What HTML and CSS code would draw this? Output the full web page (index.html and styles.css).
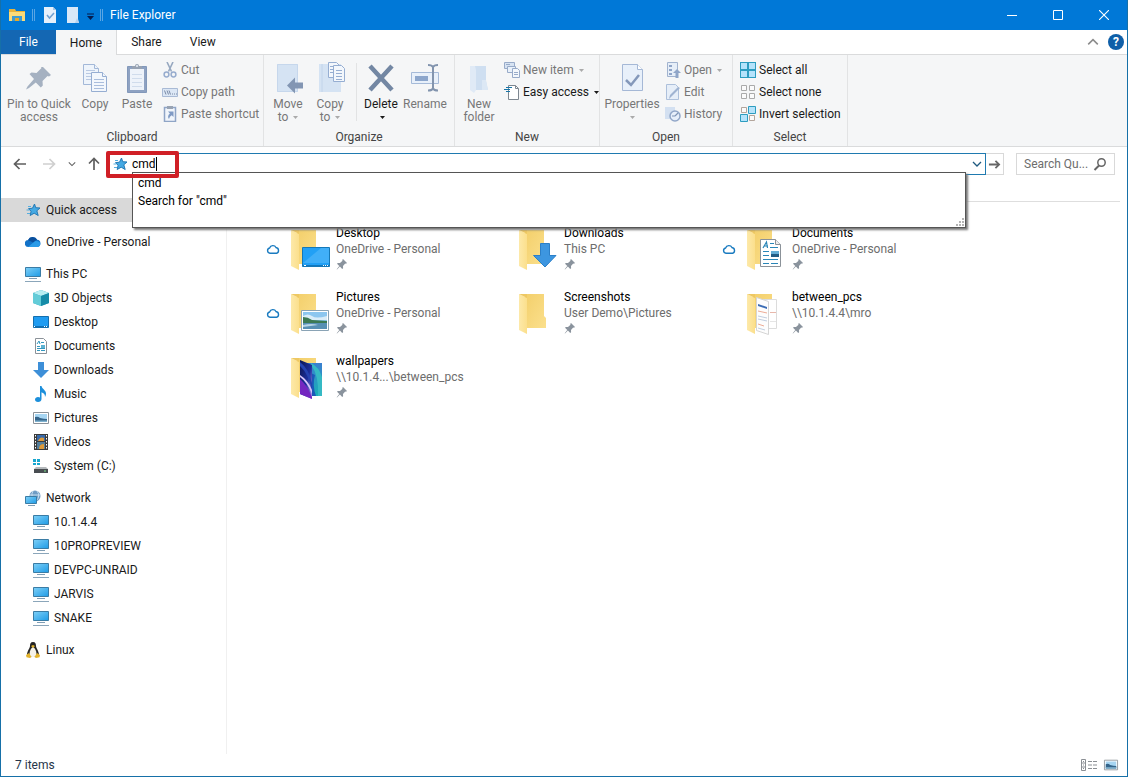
FILE: index.html
```html
<!DOCTYPE html>
<html lang="en">
<head>
  <meta charset="UTF-8" />
  <meta name="viewport" content="width=device-width, initial-scale=1.0"/>
  <title>File Explorer</title>
  <link rel="stylesheet" href="styles.css">
</head>
<body>
  <!-- icon sprite -->
  <svg class="sprite" aria-hidden="true">
    <defs>
      <linearGradient id="screenFill" x1="0" y1="0" x2="1" y2="1">
        <stop offset="0" stop-color="#7fd0f7"/><stop offset="1" stop-color="#1e9be6"/>
      </linearGradient>
      <linearGradient id="folderBack" x1="0" y1="0" x2="1" y2="1">
        <stop offset="0" stop-color="#f3cf6b"/><stop offset="1" stop-color="#fbe08d"/>
      </linearGradient>
      <linearGradient id="folderFlap" x1="0" y1="0" x2="1" y2="0">
        <stop offset="0" stop-color="#fde9a9"/><stop offset="1" stop-color="#fbdf8c"/>
      </linearGradient>
      <linearGradient id="wall" x1="0" y1="0" x2="1" y2="1">
        <stop offset="0" stop-color="#0b1650"/><stop offset=".55" stop-color="#1c2f9c"/><stop offset="1" stop-color="#b79cf0"/>
      </linearGradient>
      <linearGradient id="wall2" x1="0" y1="0" x2="0" y2="1">
        <stop offset="0" stop-color="#3a7fd0"/><stop offset="1" stop-color="#19b0b5"/>
      </linearGradient>
    </defs>
    <symbol id="i-explorer" viewBox="0 0 18 16">
      <path d="M1 2h6l1 2h9v10H1z" fill="#e8b33c"/><path d="M1 5h16v9H1z" fill="#fbdb79"/><path d="M4 14V9h10v5h-3v-3H7v3z" fill="#3f9bd0"/><path d="M7 11h4v3H7z" fill="#e9a825"/>
    </symbol>
    <symbol id="i-page-check" viewBox="0 0 14 16">
      <path d="M1 0h9l3 3v13H1z" fill="#e6f0fb"/><path d="M10 0v3h3" fill="#a9c5e4"/><path d="M4 8l2.500 3L11 6" fill="none" stroke="#6f9fd0" stroke-width="1.500"/>
    </symbol>
    <symbol id="i-page-new" viewBox="0 0 14 16"><path d="M1 0h11v12l1 4H1z" fill="#d9e8f8"/><path d="M11 11l2 5h-4z" fill="#b7d1ee"/></symbol>
    <symbol id="i-qat" viewBox="0 0 9 8"><path d="M1 1h7" stroke="#051b4d"/><path d="M1 3h7L4.500 7z" fill="#051b4d"/></symbol>
    <symbol id="i-tri" viewBox="0 0 5 3"><path d="M0 0h5L2.500 3z" fill="currentColor"/></symbol>

    <symbol id="i-pin-big" viewBox="0 0 32 32">
      <path d="M20 5l8 8-2 1.500-1.500-.5-5 5 .3 4.500-2 2-5-5L6 26l-3 1.500L4.500 24.500 11 17l-4.500-5 2-1.500 5 .5 5-5-.5-1z" fill="#a5b1c1"/>
    </symbol>
    <symbol id="i-copy" viewBox="0 0 32 32">
      <g stroke="#a3b8d8" fill="#eef4fb"><path d="M4.500 2.500h11l4 4v16h-15z"/><path d="M15.500 2.500v4h4" /></g>
      <path d="M7 8.500h9M7 11.500h9M7 14.500h9M7 17.500h9" stroke="#b9c9e2"/>
      <g stroke="#96aed2" fill="#f3f7fc"><path d="M12.500 10.500h11l4 4v15h-15z"/><path d="M23.500 10.500v4h4"/></g>
      <path d="M15 17.500h10M15 20.500h10M15 23.500h10M15 26.500h10" stroke="#a9bddc"/>
    </symbol>
    <symbol id="i-paste" viewBox="0 0 32 32">
      <path d="M6.500 4.500h19v26h-19z" fill="#8ea2c2" stroke="#8298ba"/><path d="M9 7h14v21H9z" fill="#eef3fa"/>
      <path d="M11 12.500h10M11 16.500h10M11 20.500h10M11 24.500h10" stroke="#d0dcec"/>
      <path d="M11 7V4h3a2 2 0 0 1 4 0h3v3z" fill="#98a3b3"/><circle cx="16" cy="4" r="1" fill="#e9eef5"/>
    </symbol>
    <symbol id="i-cut" viewBox="0 0 16 16">
      <path d="M5 0l4.500 9.500M11 0L6.500 9.500" stroke="#97a8c0" stroke-width="1.600" fill="none"/>
      <circle cx="4.500" cy="12.500" r="2.400" fill="none" stroke="#97acce" stroke-width="1.500"/><circle cx="11.500" cy="12.500" r="2.400" fill="none" stroke="#97acce" stroke-width="1.500"/>
    </symbol>
    <symbol id="i-path" viewBox="0 0 16 16">
      <path d="M.5 4.500h15v8H.5z" fill="#dce7f5" stroke="#a9bad5"/><path d="M2.500 6.500l1.500 4M5 6.500l1.500 4M7 6.500l1.500 4" stroke="#7889a5"/><path d="M10 10h1M12 10h1M14 10h1" stroke="#7889a5"/>
    </symbol>
    <symbol id="i-shortcut" viewBox="0 0 16 16">
      <path d="M2.500 1.500h11v14h-11z" fill="#f0f5fb" stroke="#8fa5c6" stroke-width="1.500"/><path d="M5 0h6v3H5z" fill="#98a3b3"/><path d="M6 5.500h5.500V11L9.700 9.200Q7.500 10.500 7 13 4.800 10 7.900 7.400z" fill="#7f9ac4"/>
    </symbol>
    <symbol id="i-move" viewBox="0 0 32 32">
      <path d="M5 2h21v28H5z" fill="#d5e3f3"/><path d="M5.500 2.500h20v27h-20z" fill="none" stroke="#c6d7ec"/><path d="M15 23.500l8-8v5h8v6h-8v5z" fill="#8396b3"/>
    </symbol>
    <symbol id="i-copyto" viewBox="0 0 32 32">
      <path d="M5 2h22v28H5z" fill="#d5e3f3"/><path d="M8 2v28" stroke="#c2d4ea"/>
      <g stroke="#96aed2" fill="#f3f7fc"><path d="M14.500.5h8l3 3v12h-11z"/><path d="M19.500 3.500h8l3 3v13h-11z"/></g>
      <path d="M22 8.500h6M22 11.500h6M22 14.500h6M22 17.500h6M16 4.500h3M16 7.500h3M16 10.500h3" stroke="#96aed2"/>
    </symbol>
    <symbol id="i-delete" viewBox="0 0 32 32"><path d="M5 4l22 24M27 4L5 28" stroke="#7387a3" stroke-width="4.500"/></symbol>
    <symbol id="i-rename" viewBox="0 0 32 32">
      <path d="M2.500 10.500h27v11h-27z" fill="#e8f0fa" stroke="#a5bad8"/><path d="M6 14h13v5H6z" fill="#8ca6cc"/>
      <path d="M19 3q4 0 5 2 1-2 5-2M24 4v23M19 28.500q4 0 5-2 1 2 5 2" fill="none" stroke="#8294ae" stroke-width="2"/>
    </symbol>
    <symbol id="i-newfolder" viewBox="0 0 32 32"><path d="M12 4h11v15l2 9H12z" fill="#cfdff1"/><path d="M7 4h5l1 4v20l-2 3-4-3z" fill="#e0eaf6"/><path d="M19 18h4l2 10h-6z" fill="#dce8f5"/></symbol>
    <symbol id="i-newitem" viewBox="0 0 16 16">
      <path d="M.5.5h10v6H.5z" fill="#d7e3f2" stroke="#98abc9"/><path d="M3.500 4.500h8v6h-8z" fill="#e9f1fa" stroke="#98abc9"/><path d="M8.500 6.500h5l2 2v7h-7z" fill="#f4f8fc" stroke="#98abc9"/><path d="M10 10.500h4M10 12.500h4M2 2.500h4" stroke="#98abc9"/>
    </symbol>
    <symbol id="i-easy" viewBox="0 0 16 16">
      <path d="M4.500 1.500h7l3 3v11h-10z" fill="#fff" stroke="#7e8790"/><path d="M11.500 1.500v3h3" fill="none" stroke="#7e8790"/><path d="M2 3.500h6M0 5.500h6M2 7.500h4" stroke="#1976a8" stroke-width="1.200"/>
    </symbol>
    <symbol id="i-props" viewBox="0 0 32 32">
      <path d="M6.500 2.500h15l5 5v21h-20z" fill="#e8f0fa" stroke="#a5b8d6"/><path d="M21.500 2.500v5h5" fill="#fff" stroke="#a5b8d6"/><path d="M10 18l5 5 8-10" fill="none" stroke="#8498ba" stroke-width="2.500"/>
    </symbol>
    <symbol id="i-open" viewBox="0 0 16 16">
      <path d="M2.500.5h10v14h-10z" fill="#e6eef8" stroke="#a1b3cf"/><path d="M4 3h3v2H4zM4 7h3v2H4zM4 11h3v2H4z" fill="#8fa5c8"/><path d="M12 7l4 4h-2.500v5h-3v-5H8z" fill="#8fa5c8"/>
    </symbol>
    <symbol id="i-edit" viewBox="0 0 16 16">
      <path d="M1.500.5h9l3 3v12h-12z" fill="#e6eef8" stroke="#adc0db"/><path d="M15 4L7 12l-3 3 1-4 8-8z" fill="#9fb3d1"/>
    </symbol>
    <symbol id="i-history" viewBox="0 0 16 16">
      <path d="M0 1h10v12H0z" fill="#d3e0f1"/><circle cx="10" cy="10" r="5" fill="#e6eefa" stroke="#91a6c8" stroke-width="1.500"/><path d="M10 10l3-3M10 10H7" stroke="#7f94b5" stroke-width="1.200"/>
    </symbol>
    <symbol id="i-selall" viewBox="0 0 16 16"><path d="M0 0h16v16H0z" fill="#2d9dc0"/><path d="M1 1h6v6H1zM9 1h6v6H9zM1 9h6v6H1zM9 9h6v6H9z" fill="#b5e3fb"/></symbol>
    <symbol id="i-selnone" viewBox="0 0 16 16"><path d="M1.500 1.500h5v5h-5zM9.500 1.500h5v5h-5zM1.500 9.500h5v5h-5zM9.500 9.500h5v5h-5z" fill="#fbfbfb" stroke="#aaa"/></symbol>
    <symbol id="i-selinv" viewBox="0 0 16 16"><path d="M1.500 1.500h5v5h-5zM9.500 9.500h5v5h-5z" fill="#fbfbfb" stroke="#b3a59c"/><path d="M8.500.5h7v7h-7zM.5 8.500h7v7h-7z" fill="#b5e3fb" stroke="#2d9dc0"/></symbol>

    <symbol id="i-star" viewBox="0 0 16 16">
      <path d="M9.500 2l1.200 3.700 4.300.3-3.200 2.800 1.400 4.700-4-2.300-4 2.300.9-4.300L3.500 6.700l4-.5z" fill="#45a9e3" stroke="#2379b5"/>
      <path d="M3 4.500h3M1.500 8h3M2 11.500h3" stroke="#55aee0"/>
    </symbol>
    <symbol id="i-onedrive" viewBox="0 0 16 16"><path d="M3.500 13a3.500 3.500 0 0 1-.3-7 5 5 0 0 1 9-.3A3.700 3.700 0 0 1 12.500 13z" fill="#1272c8"/><path d="M3 13l7-6 3 .2A3 3 0 0 1 13 13z" fill="#2a9be8"/><path d="M3 6a5 5 0 0 1 9-.4L8 8.500z" fill="#0b4f9c"/></symbol>
    <symbol id="i-pc" viewBox="0 0 16 16">
      <path d="M.5 1.500h15v9H.5z" fill="url(#screenFill)" stroke="#3a7ca5"/><path d="M4 12.500h8" stroke="#7f9db4"/><path d="M0 15.500h16" stroke="#8ba6ba"/>
    </symbol>
    <symbol id="i-3d" viewBox="0 0 16 16"><path d="M8 0l8 3v10l-8 3-8-3V3z" fill="#2ea9c0"/><path d="M8 0l8 3-8 3-8-3z" fill="#b8eef2"/><path d="M0 3l8 3v10l-8-3z" fill="#63ccd8"/><path d="M8 6l8-3v10l-8 3z" fill="#168ca8"/></symbol>
    <symbol id="i-desktop" viewBox="0 0 16 16"><path d="M.5 2.500h15v11H.5z" fill="#209cf1" stroke="#146fae"/><path d="M1 12.500h14" stroke="#0f6fb4"/><path d="M1 12.500h1M11 12.500h1M13 12.500h1" stroke="#fff"/></symbol>
    <symbol id="i-doc" viewBox="0 0 16 16"><path d="M2.500.5h8l3 3v12h-11z" fill="#fff" stroke="#8b9299"/><path d="M4 6l2-3 1 3M8 4.500h3M4 8.500h3M4 10.500h8M4 12.500h3M8 12.500h4" stroke="#3498bf" fill="none"/><path d="M8 7h4v3H8z" fill="#5eb3d3"/></symbol>
    <symbol id="i-down" viewBox="0 0 16 16"><path d="M5 0h6v8h5l-8 8-8-8h5z" fill="#3d8fd8"/></symbol>
    <symbol id="i-music" viewBox="0 0 16 16"><path d="M7 0h1.500c.5 3 4.500 4 4.500 7.500 0 1.500-.5 2.500-1 3.500.3-3-1.500-4-3.500-4.800V13c0 2-1.500 3-3.500 3S2 15 2 13.500 3.500 11 5 11c.8 0 1.500.2 2 .5z" fill="#1c8fdb"/></symbol>
    <symbol id="i-pic" viewBox="0 0 16 16"><path d="M.5 2.500h15v11H.5z" fill="#fff" stroke="#8b9299"/><path d="M2 4h12v8H2z" fill="#a6d5f2"/><path d="M2 7q3-1 5 1 4 1 7 1v3H2z" fill="#34648a"/><path d="M2 10.500h12V12H2z" fill="#7fb2cf"/></symbol>
    <symbol id="i-video" viewBox="0 0 16 16"><path d="M1 0h14v16H1z" fill="#3b3b3b"/><path d="M4 1h8v6H4z" fill="#3869a8"/><path d="M4 8h8v7H4z" fill="#557f9c"/><path d="M5 7q2-5 6-3v3zM6 15q0-5 5-5v5z" fill="#dd9a3b"/><path d="M2.500 1v14M13.500 1v14" stroke="#fff" stroke-dasharray="1.500 1.500"/></symbol>
    <symbol id="i-drive" viewBox="0 0 16 16"><path d="M0 1h3v3H0zM4 1h3v3H4zM0 5h3v2H0zM4 5h3v2H4z" fill="#18a7cf"/><path d="M3 9h10l2 2H1z" fill="#b5b9bc"/><path d="M1 11h14v4H1z" fill="#484d51"/><path d="M11 13h2" stroke="#7be08a"/></symbol>
    <symbol id="i-net" viewBox="0 0 16 16"><circle cx="10" cy="6" r="5.500" fill="#6f9cc4"/><path d="M8 1q-3 5 2 10M12 1q4 5-1 10M5 5h10" stroke="#c9dff0" fill="none"/><path d="M.5 6.500h11v7H.5z" fill="url(#screenFill)" stroke="#3a7ca5"/><path d="M3 15.500h7" stroke="#7f9db4"/></symbol>
    <symbol id="i-tux" viewBox="0 0 16 16">
      <path d="M8 0c2.500 0 3 2 3 4 0 2 3 5 3 9l-2 2H4l-2-2c0-4 3-7 3-9 0-2 .5-4 3-4z" fill="#252525"/><path d="M8 5c2 1 3.500 4 3.500 7S10 15 8 15s-3.500 0-3.500-3S6 6 8 5z" fill="#f5f2e9"/><path d="M6 4l2-1 2 1-2 2zM1 13l3-2 2.500 4-1.500 1-3.500-.8zM15 13l-3-2-2.500 4 1.500 1 3.500-.8z" fill="#e3b32c"/>
    </symbol>

    <symbol id="i-back" viewBox="0 0 14 14"><path d="M13 7H2M6.500 2L1.500 7l5 5" fill="none" stroke="currentColor" stroke-width="1.700"/></symbol>
    <symbol id="i-fwd" viewBox="0 0 14 14"><path d="M1 7h11M7.500 2l5 5-5 5" fill="none" stroke="currentColor" stroke-width="1.700"/></symbol>
    <symbol id="i-up" viewBox="0 0 14 14"><path d="M7 13V2M2 6.500l5-5 5 5" fill="none" stroke="currentColor" stroke-width="1.700"/></symbol>
    <symbol id="i-chev" viewBox="0 0 10 10"><path d="M1 3l4 4 4-4" fill="none" stroke="currentColor" stroke-width="1.300"/></symbol>
    <symbol id="i-chev-up" viewBox="0 0 10 10"><path d="M1 7l4-4 4 4" fill="none" stroke="currentColor" stroke-width="1.300"/></symbol>
    <symbol id="i-go" viewBox="0 0 14 14"><path d="M1 7h11M8 3l4 4-4 4" fill="none" stroke="currentColor" stroke-width="1.900"/></symbol>
    <symbol id="i-search" viewBox="0 0 14 14"><circle cx="8.500" cy="5.500" r="3.700" fill="none" stroke="currentColor" stroke-width="1.500"/><path d="M6 8.500L1.500 13" stroke="currentColor" stroke-width="2"/></symbol>
    <symbol id="i-min" viewBox="0 0 10 10"><path d="M0 5.500h10" stroke="#fff"/></symbol>
    <symbol id="i-max" viewBox="0 0 10 10"><path d="M.5.5h9v9h-9z" fill="none" stroke="#fff"/></symbol>
    <symbol id="i-close" viewBox="0 0 10 10"><path d="M0 0l10 10M10 0L0 10" stroke="#fff" stroke-width="1.100"/></symbol>
    <symbol id="i-grip" viewBox="0 0 10 10"><path d="M7 1h2v2H7zM4 4h2v2H4zM7 4h2v2H7zM1 7h2v2H1zM4 7h2v2H4zM7 7h2v2H7z" fill="#b4b4b4"/></symbol>

    <symbol id="i-cloud" viewBox="0 0 14 14"><path d="M4 11.300a2.700 2.700 0 0 1-.4-5.300A3.500 3.500 0 0 1 10 5.500a3 3 0 0 1 .5 5.800z" fill="none" stroke="#1a7bc0" stroke-width="1.400"/></symbol>
    <symbol id="i-pin" viewBox="0 0 12 12"><path d="M7 1l4 4-1 .8-.8-.2L7 8l.1 2.200-.9.8-2.300-2.500L1 11.500l-.3-.3L3.300 8 1 5.800l.8-.8 2.200.1L6.500 2.800 6.200 2z" fill="#8a939d"/></symbol>
    <symbol id="f-base" viewBox="0 0 48 48">
      <path d="M10 5h19v22l2 2v10H10z" fill="url(#folderBack)"/><path d="M4 5l8 4v36l-8-4z" fill="url(#folderFlap)"/><path d="M4 5h8v4z" fill="#eec862"/>
    </symbol>
    <symbol id="f-desktop" viewBox="0 0 48 48">
      <use href="#f-base"/><path d="M15.500 22.500h27v19h-27z" fill="#22a0f5" stroke="#1478b8"/><path d="M16 38l18-15h8v15z" fill="#41aff8"/><path d="M16 40.500h26" stroke="#1277bd"/><path d="M17 40.500h2M36 40.500h1M38 40.500h1M40 40.500h1" stroke="#fff"/>
    </symbol>
    <symbol id="f-down" viewBox="0 0 48 48"><use href="#f-base"/><path d="M25.500 18.500h9v12h6.500L30 42 18.500 30.500h7z" fill="#3d96e0" stroke="#2b7fc8"/></symbol>
    <symbol id="f-doc" viewBox="0 0 48 48">
      <use href="#f-base"/><path d="M17.500 14.500h15l5 5v22h-20z" fill="#fff" stroke="#8b9299"/><path d="M32.500 14.500v5h5" fill="#eee" stroke="#8b9299"/>
      <path d="M20 23l3.500-6 1 6M21 21h4M27 18.500h4M27 22.500h8M20 26.500h6M20 30.500h6M20 34.500h15M20 38.500h6M28 38.500h7" fill="none" stroke="#2a86b8" stroke-width="1.200"/><path d="M28 26h8v6h-8z" fill="#64add6"/><path d="M28 29h8v3h-8z" fill="#225c84"/>
    </symbol>
    <symbol id="f-pic" viewBox="0 0 48 48">
      <use href="#f-base"/><path d="M14.500 21.500h27v20h-27z" fill="#fff" stroke="#8aa3b5"/><path d="M16 23h24v17H16z" fill="#8cc6ef"/><path d="M16 27q5-3 9 0t15 0v4H16z" fill="#d9ecf8"/><path d="M16 28q5 0 9 3l15 1v3H16z" fill="#3c7a54"/><path d="M16 34h24v6H16z" fill="#5790b4"/><path d="M16 36q9-2 15 0l-15 2z" fill="#b9d6e6"/>
    </symbol>
    <symbol id="f-plain" viewBox="0 0 48 48"><use href="#f-base"/></symbol>
    <symbol id="f-papers" viewBox="0 0 48 48">
      <use href="#f-base"/><path d="M19.500 10.500h14v29h-14z" fill="#fff" stroke="#dcdcdc"/><path d="M27 23.500h6" stroke="#e8b8ab"/><path d="M27 32.500h6" stroke="#e5e5e5"/>
      <path d="M13.500 8.500l12 4v33l-12-4z" fill="#fdfdfd" stroke="#d5d5d5"/><path d="M15 15l9 3v2l-9-3z" fill="#3d6db5"/><path d="M15 22l9 2M15 35l6 2" stroke="#ecab95"/><path d="M15 27l9 2M15 30l9 2M15 39l7 2" stroke="#c0cddf"/>
    </symbol>
    <symbol id="f-wall" viewBox="0 0 48 48">
      <use href="#f-base"/><path d="M20 10h15v33H20z" fill="url(#wall2)"/><path d="M24 12q8 10 7 31h4V24q-3-10-11-14z" fill="#35b9c4"/><path d="M28 22q-3 10 1 21h-5V20z" fill="#1b58b8"/>
      <path d="M13 7l12 5v34l-12-5z" fill="url(#wall)"/><path d="M13 13q9 8 12 26v-9q-3-14-12-21z" fill="#2443b0"/><path d="M13 26q7 6 12 18v2l-12-5z" fill="#7427c0"/><path d="M13 24q7 5 12 17v-4q-4-10-12-15z" fill="#d6c3fa"/>
    </symbol>
    <symbol id="i-details" viewBox="0 0 16 12"><path d="M.5.5h4v11h-4zM.5 4h4M.5 8h4" fill="none" stroke="#8b8f94"/><path d="M2 2.500h1M2 6h1M2 9.500h1M7 2.500h4M12 2.500h4M7 6h4M12 6h4M7 9.500h4M12 9.500h4" stroke="#8b8f94"/></symbol>
  </svg>

  <div class="window">
    <header class="titlebar">
      <svg class="app-icon"><use href="#i-explorer"/></svg>
      <span class="tick"></span>
      <button class="qat" aria-label="Properties"><svg><use href="#i-page-check"/></svg></button>
      <button class="qat" aria-label="New folder"><svg><use href="#i-page-new"/></svg></button>
      <button class="qat qat-more" aria-label="Customize Quick Access Toolbar"><svg><use href="#i-qat"/></svg></button>
      <span class="tick"></span>
      <span class="title">File Explorer</span>
      <div class="win-buttons">
        <button aria-label="Minimize"><svg><use href="#i-min"/></svg></button>
        <button aria-label="Maximize"><svg><use href="#i-max"/></svg></button>
        <button aria-label="Close"><svg><use href="#i-close"/></svg></button>
      </div>
    </header>

    <nav class="tabs">
      <button class="tab file">File</button>
      <button class="tab active">Home</button>
      <button class="tab">Share</button>
      <button class="tab">View</button>
      <div class="tabs-right">
        <button class="collapse" aria-label="Minimize the Ribbon"><svg><use href="#i-chev-up"/></svg></button>
        <button class="help" aria-label="Help">?</button>
      </div>
    </nav>

    <section class="ribbon">
      <div class="group clipboard">
        <div class="group-body">
          <button class="big wide" disabled><svg><use href="#i-pin-big"/></svg><span>Pin to Quick<br>access</span></button>
          <button class="big" disabled><svg><use href="#i-copy"/></svg><span>Copy</span></button>
          <button class="big" disabled><svg><use href="#i-paste"/></svg><span>Paste</span></button>
          <div class="stack">
            <button class="small" disabled><svg><use href="#i-cut"/></svg>Cut</button>
            <button class="small" disabled><svg><use href="#i-path"/></svg>Copy path</button>
            <button class="small" disabled><svg><use href="#i-shortcut"/></svg>Paste shortcut</button>
          </div>
        </div>
        <div class="group-name">Clipboard</div>
      </div>
      <div class="group organize">
        <div class="group-body">
          <button class="big" disabled><svg><use href="#i-move"/></svg><span>Move<br>to <svg class="tri"><use href="#i-tri"/></svg></span></button>
          <button class="big" disabled><svg><use href="#i-copyto"/></svg><span>Copy<br>to <svg class="tri"><use href="#i-tri"/></svg></span></button>
          <span class="divider"></span>
          <button class="big"><svg><use href="#i-delete"/></svg><span>Delete<br><svg class="tri"><use href="#i-tri"/></svg></span></button>
          <button class="big mid" disabled><svg><use href="#i-rename"/></svg><span>Rename</span></button>
        </div>
        <div class="group-name">Organize</div>
      </div>
      <div class="group new">
        <div class="group-body">
          <button class="big" disabled><svg><use href="#i-newfolder"/></svg><span>New<br>folder</span></button>
          <div class="stack">
            <button class="small" disabled><svg><use href="#i-newitem"/></svg>New item<svg class="tri"><use href="#i-tri"/></svg></button>
            <button class="small"><svg><use href="#i-easy"/></svg>Easy access<svg class="tri"><use href="#i-tri"/></svg></button>
          </div>
        </div>
        <div class="group-name">New</div>
      </div>
      <div class="group open">
        <div class="group-body">
          <button class="big props" disabled><svg><use href="#i-props"/></svg><span>Properties<br><svg class="tri"><use href="#i-tri"/></svg></span></button>
          <div class="stack">
            <button class="small" disabled><svg><use href="#i-open"/></svg>Open<svg class="tri"><use href="#i-tri"/></svg></button>
            <button class="small" disabled><svg><use href="#i-edit"/></svg>Edit</button>
            <button class="small" disabled><svg><use href="#i-history"/></svg>History</button>
          </div>
        </div>
        <div class="group-name">Open</div>
      </div>
      <div class="group select">
        <div class="group-body">
          <div class="stack">
            <button class="small"><svg><use href="#i-selall"/></svg>Select all</button>
            <button class="small"><svg><use href="#i-selnone"/></svg>Select none</button>
            <button class="small"><svg><use href="#i-selinv"/></svg>Invert selection</button>
          </div>
        </div>
        <div class="group-name">Select</div>
      </div>
    </section>

    <div class="navbar">
      <button class="nav-btn" aria-label="Back"><svg><use href="#i-back"/></svg></button>
      <button class="nav-btn" aria-label="Forward" disabled><svg><use href="#i-fwd"/></svg></button>
      <button class="nav-btn recent" aria-label="Recent locations"><svg><use href="#i-chev"/></svg></button>
      <button class="nav-btn up" aria-label="Up"><svg><use href="#i-up"/></svg></button>
      <div class="address">
        <svg class="ico"><use href="#i-star"/></svg>
        <input class="path" type="text" value="cmd" aria-label="Address">
        <span class="cursor"></span>
        <button class="drop" aria-label="Previous locations"><svg><use href="#i-chev"/></svg></button>
        <div class="suggestions">
          <a href="#">cmd</a>
          <a href="#">Search for "cmd"</a>
          <svg class="grip"><use href="#i-grip"/></svg>
        </div>
        <div class="highlight"></div>
      </div>
      <button class="go" aria-label="Go to"><svg><use href="#i-go"/></svg></button>
      <div class="search">
        <input type="text" placeholder="Search Qu..." aria-label="Search Quick access">
        <svg><use href="#i-search"/></svg>
      </div>
    </div>

    <main class="main">
      <aside class="tree">
        <ul><li class="current"><a href="#"><svg class="ico"><use href="#i-star"/></svg>Quick access</a></li></ul>
        <ul><li><a href="#"><svg class="ico"><use href="#i-onedrive"/></svg>OneDrive - Personal</a></li></ul>
        <ul>
          <li><a href="#"><svg class="ico"><use href="#i-pc"/></svg>This PC</a></li>
          <li class="sub"><a href="#"><svg class="ico"><use href="#i-3d"/></svg>3D Objects</a></li>
          <li class="sub"><a href="#"><svg class="ico"><use href="#i-desktop"/></svg>Desktop</a></li>
          <li class="sub"><a href="#"><svg class="ico"><use href="#i-doc"/></svg>Documents</a></li>
          <li class="sub"><a href="#"><svg class="ico"><use href="#i-down"/></svg>Downloads</a></li>
          <li class="sub"><a href="#"><svg class="ico"><use href="#i-music"/></svg>Music</a></li>
          <li class="sub"><a href="#"><svg class="ico"><use href="#i-pic"/></svg>Pictures</a></li>
          <li class="sub"><a href="#"><svg class="ico"><use href="#i-video"/></svg>Videos</a></li>
          <li class="sub"><a href="#"><svg class="ico"><use href="#i-drive"/></svg>System (C:)</a></li>
        </ul>
        <ul>
          <li><a href="#"><svg class="ico"><use href="#i-net"/></svg>Network</a></li>
          <li class="sub"><a href="#"><svg class="ico"><use href="#i-pc"/></svg>10.1.4.4</a></li>
          <li class="sub"><a href="#"><svg class="ico"><use href="#i-pc"/></svg>10PROPREVIEW</a></li>
          <li class="sub"><a href="#"><svg class="ico"><use href="#i-pc"/></svg>DEVPC-UNRAID</a></li>
          <li class="sub"><a href="#"><svg class="ico"><use href="#i-pc"/></svg>JARVIS</a></li>
          <li class="sub"><a href="#"><svg class="ico"><use href="#i-pc"/></svg>SNAKE</a></li>
        </ul>
        <ul><li><a href="#"><svg class="ico"><use href="#i-tux"/></svg>Linux</a></li></ul>
      </aside>

      <section class="content">
        <hr class="rule">
        <div class="tiles">
          <a class="tile" href="#"><svg class="cloud"><use href="#i-cloud"/></svg><svg class="folder"><use href="#f-desktop"/></svg>
            <span class="info"><b>Desktop</b><i>OneDrive - Personal</i><svg><use href="#i-pin"/></svg></span></a>
          <a class="tile" href="#"><span class="cloud"></span><svg class="folder"><use href="#f-down"/></svg>
            <span class="info"><b>Downloads</b><i>This PC</i><svg><use href="#i-pin"/></svg></span></a>
          <a class="tile" href="#"><svg class="cloud"><use href="#i-cloud"/></svg><svg class="folder"><use href="#f-doc"/></svg>
            <span class="info"><b>Documents</b><i>OneDrive - Personal</i><svg><use href="#i-pin"/></svg></span></a>
          <a class="tile" href="#"><svg class="cloud"><use href="#i-cloud"/></svg><svg class="folder"><use href="#f-pic"/></svg>
            <span class="info"><b>Pictures</b><i>OneDrive - Personal</i><svg><use href="#i-pin"/></svg></span></a>
          <a class="tile" href="#"><span class="cloud"></span><svg class="folder"><use href="#f-plain"/></svg>
            <span class="info"><b>Screenshots</b><i>User Demo\Pictures</i><svg><use href="#i-pin"/></svg></span></a>
          <a class="tile" href="#"><span class="cloud"></span><svg class="folder"><use href="#f-papers"/></svg>
            <span class="info"><b>between_pcs</b><i>\\10.1.4.4\mro</i><svg><use href="#i-pin"/></svg></span></a>
          <a class="tile" href="#"><span class="cloud"></span><svg class="folder"><use href="#f-wall"/></svg>
            <span class="info"><b>wallpapers</b><i>\\10.1.4...\between_pcs</i><svg><use href="#i-pin"/></svg></span></a>
        </div>
      </section>
    </main>

    <footer class="status">
      <span>7 items</span>
      <div class="views">
        <button aria-label="Details view"><svg><use href="#i-details"/></svg></button>
        <button aria-label="Large icons view"><svg><use href="#i-pic"/></svg></button>
      </div>
    </footer>
  </div>
</body>
</html>
```
FILE: styles.css
```css
* { box-sizing: border-box; }

body {
  margin: 0;
  font: 12px/16px Roboto, "Segoe UI", sans-serif;
  color: #1a1a1a;
}

button, input {
  font: inherit;
  color: inherit;
  border: 0;
  padding: 0;
  background: none;
}

a { color: inherit; text-decoration: none; }
svg { display: block; flex: none; }
.sprite { position: absolute; width: 0; height: 0; }
.ico { width: 16px; height: 16px; }

.window {
  display: flex;
  flex-direction: column;
  min-height: 100vh;
  background: #fff;
  border: 1px solid #1670a8;
  border-top: 0;
}

/* title bar */
.titlebar {
  display: flex;
  align-items: center;
  height: 30px;
  padding-left: 7px;
  background: #0078d7;
  color: #fff;
}

.app-icon { width: 18px; height: 16px; }
.tick {
  width: 3px;
  height: 12px;
  margin: 0 7px 0 6px;
  border: solid #5aa6e4;
  border-width: 0 1px;
}
.qat { margin-left: 1px; margin-right: 8px; }
.qat svg { width: 14px; height: 16px; }
.qat-more { margin: 0 -1px 0 -2px; }
.qat-more svg { width: 9px; height: 8px; margin-top: 3px; }
.title { flex: 1; }

.win-buttons { display: flex; }
.win-buttons button {
  display: grid;
  place-items: center;
  width: 46px;
  height: 30px;
}
.win-buttons svg { width: 10px; height: 10px; }

/* tabs */
.tabs { display: flex; height: 24px; }
.tab { padding: 0 14px; }
.tab.file { padding: 0 18px; background: #1467b3; color: #fff; }
.tab.active {
  position: relative;
  height: 25px;
  background: #f5f6f7;
  border-right: 1px solid #dadbdc;
}
.tabs-right { display: flex; align-items: center; gap: 9px; margin-left: auto; padding-right: 3px; }
.collapse { color: #8c8c8c; }
.collapse svg { width: 12px; height: 12px; }
.help {
  width: 16px;
  height: 16px;
  border-radius: 50%;
  background: #0f5fa8;
  color: #fff;
  font-weight: 700;
  line-height: 16px;
}

/* ribbon */
.ribbon {
  display: flex;
  background: #f5f6f7;
  border-top: 1px solid #dadbdc;
  border-bottom: 1px solid #dadbdc;
}

.group {
  display: flex;
  flex-direction: column;
  padding: 4px 3px 1px;
  border-right: 1px solid #e2e3e4;
}
.clipboard { width: 263px; }
.organize { width: 191px; }
.new { width: 145px; }
.open { width: 133px; }
.select { width: 115px; }

.group-body { display: flex; height: 70px; }
.group-name { text-align: center; color: #444; }

.big {
  display: flex;
  flex-direction: column;
  align-items: center;
  gap: 4px;
  flex: none;
  width: 42px;
  padding-top: 3px;
  line-height: 13px;
}
.big > svg { width: 32px; height: 32px; }
.big.wide { width: 70px; }
.big.mid { width: 46px; }
.big.props { width: 58px; }
.big span { white-space: nowrap; }
button:disabled { color: #777; }

.tri { display: inline-block; width: 5px; height: 3px; vertical-align: middle; margin-left: 2px; }
button:disabled .tri { color: #aaa; }

.stack { display: flex; flex-direction: column; padding-left: 4px; }
.small {
  display: flex;
  align-items: center;
  gap: 3px;
  height: 22px;
  white-space: nowrap;
}
.small > svg:first-child { width: 16px; height: 16px; }

.divider { width: 1px; margin: 4px 3px 8px 5px; background: #e2e3e4; }

/* address row */
.navbar {
  display: flex;
  align-items: center;
  height: 34px;
  padding: 0 12px;
}

.nav-btn { color: #5f5f5f; margin-right: 15px; }
.nav-btn svg { width: 14px; height: 14px; }
.nav-btn:disabled { color: #cfcfcf; margin-right: 12px; }
.recent { margin-right: 11px; }
.recent svg { width: 8px; height: 8px; }
.up { margin-right: 7px; }

.address {
  position: relative;
  display: flex;
  align-items: center;
  flex: 1;
  height: 22px;
  padding-left: 3px;
  border: 1px solid #1f7ab0;
}
.path { field-sizing: content; margin-left: 4px; outline: 0; color: #000; }
.cursor { width: 1px; height: 14px; background: #000; }
.drop { margin-left: auto; padding: 0 3px; color: #1f5a80; }
.drop svg { width: 10px; height: 10px; }

.suggestions {
  position: absolute;
  z-index: 1;
  top: 18px;
  left: 23px;
  right: 19px;
  height: 56px;
  padding: 1px 5px;
  background: #fff;
  border: 1px solid #555;
  box-shadow: 2px 2px 2px #777;
  color: #000;
}
.suggestions a { display: block; line-height: 18px; }
.grip { position: absolute; right: 0; bottom: 0; width: 10px; height: 10px; }

/* frame round the typed command */
.highlight {
  position: absolute;
  z-index: 2;
  top: -3px;
  left: -3px;
  width: 73px;
  height: 27px;
  border: 4px solid #d01f26;
  border-radius: 2px;
  pointer-events: none;
}

.go {
  display: grid;
  place-items: center;
  width: 18px;
  height: 22px;
  border: 1px solid #d9d9d9;
  border-left: 0;
  color: #666;
}
.go svg { width: 13px; height: 13px; }

.search {
  display: flex;
  align-items: center;
  width: 99px;
  height: 22px;
  margin-left: 12px;
  padding: 0 7px;
  border: 1px solid #d9d9d9;
  color: #666;
}
.search input { flex: 1; min-width: 0; outline: 0; }
.search input::placeholder { color: #6d6d6d; }
.search svg { width: 14px; height: 14px; }

/* body */
.main { display: flex; flex: 1; }

.tree {
  flex: none;
  width: 226px;
  padding-top: 17px;
  border-right: 1px solid #f0f0f0;
}
.tree ul { list-style: none; margin: 0 0 8px; padding: 0; }
.tree a {
  display: flex;
  align-items: center;
  gap: 5px;
  height: 24px;
  padding-left: 24px;
}
.tree .sub a { padding-left: 32px; }
.tree .current { background: #d9d9d9; }

.content { flex: 1; padding: 20px 7px 0 12px; }
.rule { margin: 0 0 15px; border: 0; border-top: 1px solid #dedede; }

.tiles { display: grid; grid-template-columns: repeat(auto-fill, 228px); padding-left: 27px; }
.tile { display: flex; align-items: center; height: 64px; }
.cloud { width: 14px; height: 14px; margin-right: 7px; }
.folder { width: 48px; height: 48px; }
.info { display: flex; flex-direction: column; margin-left: 1px; white-space: nowrap; }
.info b { font-weight: 400; color: #000; }
.info i { font-style: normal; color: #6d6d6d; }
.info svg { width: 12px; height: 12px; margin: 1px 0 3px; }

.status {
  display: flex;
  justify-content: space-between;
  align-items: center;
  height: 22px;
  padding: 0 8px 0 14px;
  color: #26354a;
}
.views { display: flex; align-items: center; gap: 6px; }
.views svg { width: 16px; height: 12px; }
.views button + button svg { height: 14px; }
```
